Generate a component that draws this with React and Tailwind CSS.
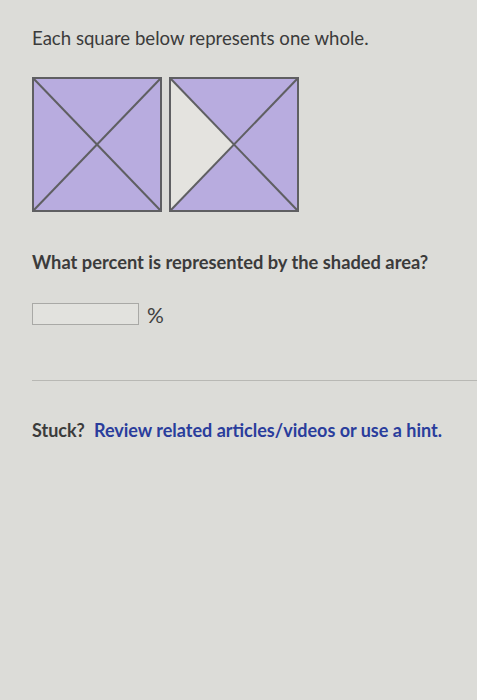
import React from 'react'

function Square({ leftBlank }) {
  return (
    <svg width="130" height="135" viewBox="0 0 130 135" className="block">
      <rect x="1" y="1" width="128" height="133" fill="#b8acdf" stroke="#5f5f62" strokeWidth="2" />
      {leftBlank && <polygon points="2,2 65,67.5 2,133" fill="#e4e3df" />}
      <line x1="1" y1="1" x2="129" y2="134" stroke="#5f5f62" strokeWidth="2" />
      <line x1="129" y1="1" x2="1" y2="134" stroke="#5f5f62" strokeWidth="2" />
      <rect x="1" y="1" width="128" height="133" fill="none" stroke="#5f5f62" strokeWidth="2" />
    </svg>
  )
}

export default function App() {
  return (
    <div className="min-h-[700px] w-[477px] bg-[#dcdcd8] text-[#3b3b3b] pl-8 pt-[26px]" style={{ fontFamily: 'Lato, "Open Sans", sans-serif' }}>
      <p className="text-[18.6px] leading-6">Each square below represents one whole.</p>

      <div className="flex gap-[7px] mt-[27px]">
        <Square />
        <Square leftBlank />
      </div>

      <p className="text-[18.3px] font-bold leading-6 mt-[38px]">What percent is represented by the shaded area?</p>

      <div className="flex items-center gap-2 mt-[29px]">
        <div className="w-[107px] h-[22px] border border-[#a9a9a6] bg-[#e2e2de]" />
        <span className="text-[21px] leading-none text-[#404040]">%</span>
      </div>

      <div className="h-px bg-[#b8b8b4] mt-[55px]" />

      <p className="text-[18px] font-bold leading-6 mt-[37px]">
        <span className="text-[#3b3b3b]">Stuck?</span>
        <span className="text-[#2a3d9c] ml-[9px]">Review related articles/videos or use a hint.</span>
      </p>
    </div>
  )
}
